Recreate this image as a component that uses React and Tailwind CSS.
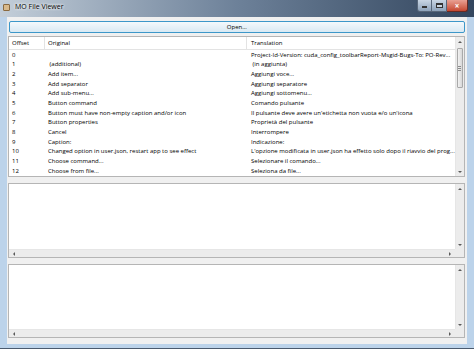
import React from "react";

const rows = [
  ["0", "", "Project-Id-Version: cuda_config_toolbarReport-Msgid-Bugs-To: PO-Rev..."],
  ["1", "\u00a0(additional)", "\u00a0(in aggiunta)"],
  ["2", "Add item...", "Aggiungi voce..."],
  ["3", "Add separator", "Aggiungi separatore"],
  ["4", "Add sub-menu...", "Aggiungi sottomenu..."],
  ["5", "Button command", "Comando pulsante"],
  ["6", "Button must have non-empty caption and/or icon", "Il pulsante deve avere un'etichetta non vuota e/o un'icona"],
  ["7", "Button properties", "Proprietà del pulsante"],
  ["8", "Cancel", "Interrompere"],
  ["9", "Caption:", "Indicazione:"],
  ["10", "Changed option in user.json, restart app to see effect", "L'opzione modificata in user.json ha effetto solo dopo il riavvio del prog..."],
  ["11", "Choose command...", "Selezionare il comando..."],
  ["12", "Choose from file...", "Seleziona da file..."],
];

const Arrow = ({ dir }) => {
  const pts = {
    up: "0,3 2,1 4,3",
    down: "0,1 2,3 4,1",
    left: "3,0 1,2 3,4",
    right: "1,0 3,2 1,4",
  };
  return (
    <svg width="4" height="4" viewBox="0 0 4 4">
      <polygon points={pts[dir]} fill="#5a5a5a" />
    </svg>
  );
};

const VScroll = ({ thumb }) => (
  <div className="flex w-[9px] flex-col items-center border-l border-[#e6e6e6] bg-[#ececec]">
    <div className="flex h-[9px] items-center justify-center">
      <Arrow dir="up" />
    </div>
    <div className="flex-1 w-full px-[1px]">
      {thumb && (
        <div className="mt-[2px] flex h-[40px] w-full items-center justify-center rounded-[1px] border border-[#a9a9a9] bg-gradient-to-r from-[#f2f2f2] to-[#d8d8d8]">
          <div className="flex flex-col gap-[1px]">
            <div className="h-px w-[3px] bg-[#8c8c8c]" />
            <div className="h-px w-[3px] bg-[#8c8c8c]" />
            <div className="h-px w-[3px] bg-[#8c8c8c]" />
          </div>
        </div>
      )}
    </div>
    <div className="flex h-[9px] items-center justify-center">
      <Arrow dir="down" />
    </div>
  </div>
);

const TextPanel = ({ h }) => (
  <div className={`flex ${h} flex-col border border-[#b5b5b5] bg-white`}>
    <div className="flex flex-1">
      <div className="flex-1" />
      <VScroll />
    </div>
    <div className="flex h-[8px]">
      <div className="flex flex-1 items-center justify-between border-t border-[#e6e6e6] bg-[#ececec] px-[3px]">
        <Arrow dir="left" />
        <Arrow dir="right" />
      </div>
      <div className="w-[9px] bg-[#ececec]" />
    </div>
  </div>
);

export default function App() {
  return (
    <div
      className="flex h-[349px] w-[474px] flex-col overflow-hidden bg-[#bcd3ea] text-black"
      style={{ fontFamily: "'Open Sans', 'Noto Sans', sans-serif" }}
    >
      {/* title bar */}
      <div className="relative flex h-[17px] items-start bg-gradient-to-r from-[#c3ced9] via-[#6d8199] to-[#33465e]">
        <div className="ml-[3px] mt-[4px] h-[7px] w-[7px] rounded-[1px] border border-[#8a6a40] bg-[#d9b98a]" />
        <span className="ml-[5px] mt-[2px] text-[7px] leading-[10px] text-black [text-shadow:0_0_3px_#fff,0_0_3px_#fff]">
          MO File Viewer
        </span>
        <div className="ml-auto mr-[6px] flex h-[12px]">
          <div className="flex w-[15px] items-end justify-center rounded-bl-[3px] border border-t-0 border-[#58677a] bg-gradient-to-b from-[#c9d6e4] to-[#8ea3bb] pb-[3px]">
            <div className="h-[2px] w-[5px] border border-[#333] bg-white" />
          </div>
          <div className="flex w-[15px] items-center justify-center border-b border-r border-[#58677a] bg-gradient-to-b from-[#c9d6e4] to-[#8ea3bb]">
            <div className="h-[5px] w-[7px] border border-t-2 border-[#333] bg-white/40" />
          </div>
          <div className="flex w-[21px] items-center justify-center rounded-br-[3px] border-b border-r border-[#6b2a22] bg-gradient-to-b from-[#e8a093] to-[#c5462f] text-[8px] font-bold leading-none text-white">
            ×
          </div>
        </div>
      </div>

      {/* body */}
      <div className="flex flex-1 pl-[7px] pr-[8px]">
        <div className="flex flex-1 flex-col bg-[#f0f0f0] pb-[6px] pl-[1px] pr-[2px] pt-[4px]">
          <button className="ml-[1px] flex h-[12px] items-center justify-center rounded-[2px] border border-[#3d97c9] bg-gradient-to-b from-[#f4f9fc] to-[#d9e9f3] text-[6px] leading-none">
            Open...
          </button>

          {/* list */}
          <div className="mt-[3px] flex h-[141px] border border-[#b5b5b5] bg-white">
            <div className="flex flex-1 flex-col overflow-hidden text-[6px] font-medium">
              <div className="flex h-[13px] shrink-0 items-center border-b border-[#e3e3e3]">
                <div className="w-[36px] border-r border-[#e3e3e3] pl-[3px] leading-[13px]">Offset</div>
                <div className="w-[202px] border-r border-[#e3e3e3] pl-[3px] leading-[13px]">Original</div>
                <div className="flex-1 pl-[4px] leading-[13px]">Translation</div>
              </div>
              {rows.map(([o, a, t]) => (
                <div key={o} className="flex h-[9.67px] shrink-0 items-center whitespace-nowrap leading-none">
                  <div className="w-[36px] pl-[3px]">{o}</div>
                  <div className="w-[202px] overflow-hidden pl-[3px]">{a}</div>
                  <div className="flex-1 overflow-hidden pl-[4px]">{t}</div>
                </div>
              ))}
            </div>
            <VScroll thumb />
          </div>

          <div className="mt-[6px]">
            <TextPanel h="h-[75px]" />
          </div>
          <div className="mt-[6px]">
            <TextPanel h="h-[74px]" />
          </div>
        </div>
      </div>

      <div className="h-[5px] border-b border-[#4a5a6e]" />
    </div>
  );
}
